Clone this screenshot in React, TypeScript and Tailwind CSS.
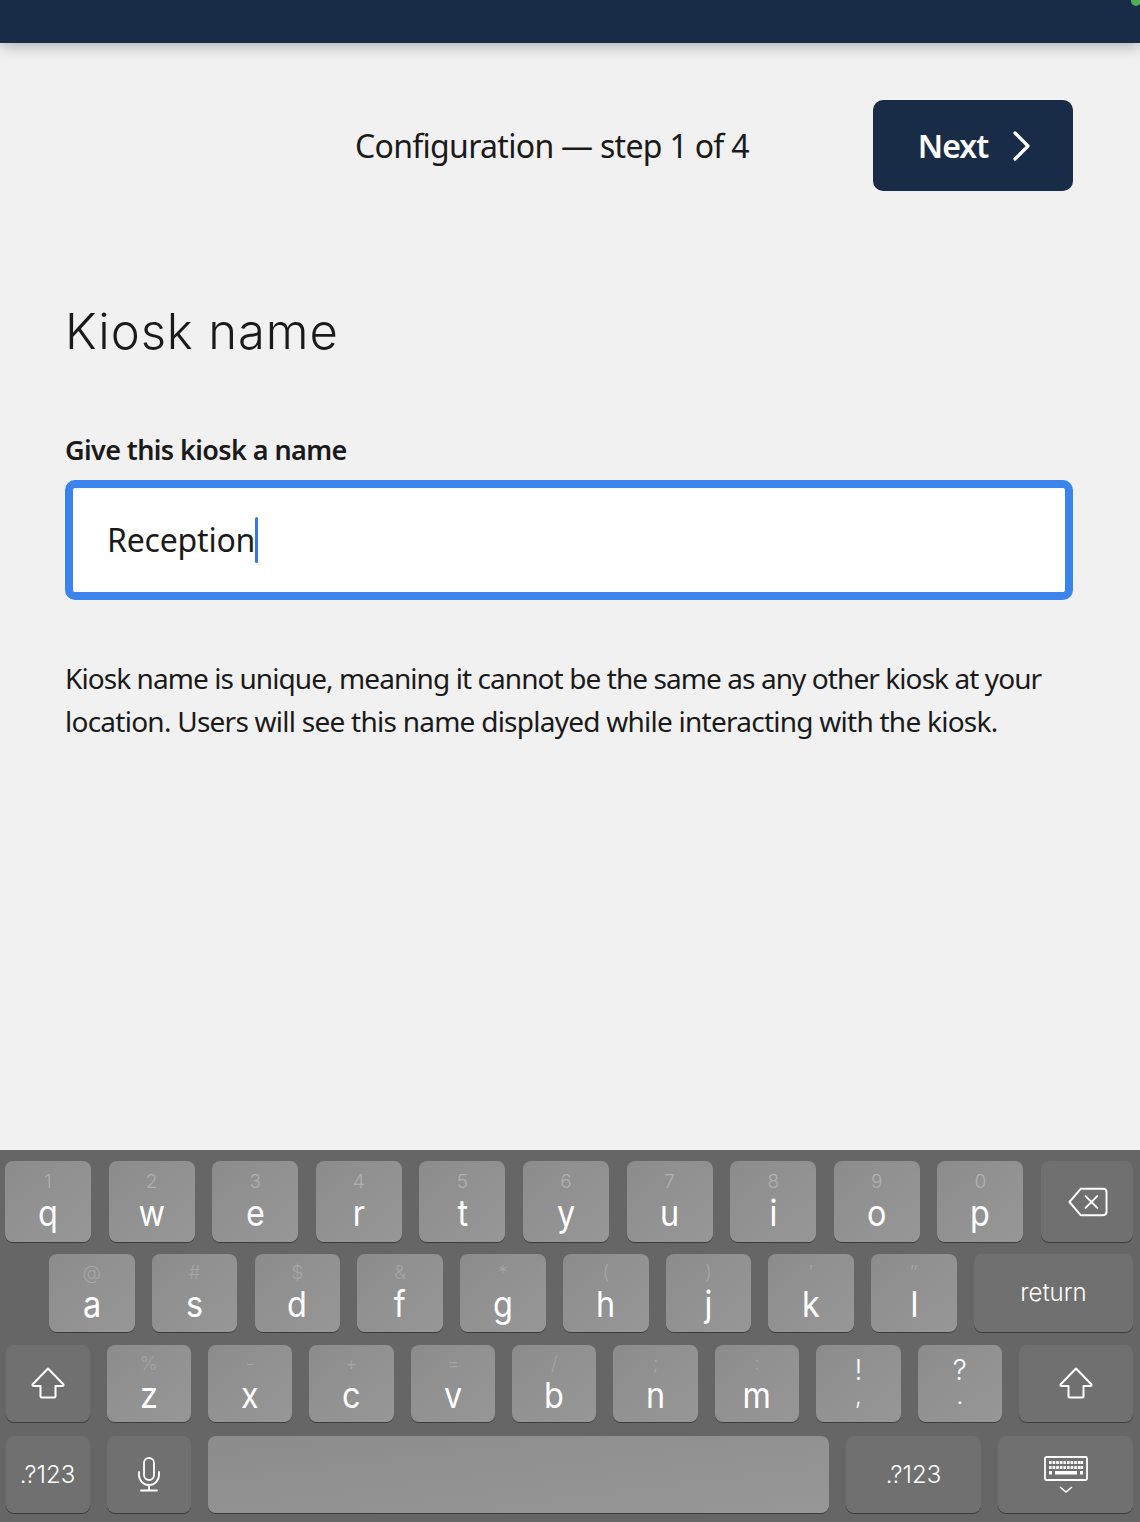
import React from "react";

const body = { fontFamily: '"Noto Sans", sans-serif' };
const kb = { fontFamily: 'Inter, sans-serif' };

function Key({ letter, hint, pt, hintColor }: { letter: string; hint: string; pt: string; hintColor: string }) {
  return (
    <div className={`flex-1 min-w-0 rounded-lg bg-gradient-to-br from-[#8c8c8c] to-[#979797] shadow-[0_1px_0_#3c3c3c] flex flex-col items-center ${pt}`}>
      <span className={`text-[19px] leading-[24px] font-[350] ${hintColor}`}>{hint}</span>
      <span className="text-[36px] leading-[38px] font-[380] text-white scale-x-[0.9]">{letter}</span>
    </div>
  );
}

function Dark({ className, children }: { className: string; children: React.ReactNode }) {
  return (
    <div className={`rounded-lg bg-[#707070] shadow-[0_1px_0_#3c3c3c] flex items-center justify-center text-white font-[350] ${className}`}>
      {children}
    </div>
  );
}

function ShiftIcon() {
  return (
    <svg className="mb-[2px]" width="34" height="32" viewBox="0 0 34 32" fill="none" stroke="white" strokeWidth="2" strokeLinejoin="round">
      <path d="M17 1.5 L32.5 17.5 Q33 19 31 19 H24.5 V29 Q24.5 30.5 23 30.5 H11 Q9.5 30.5 9.5 29 V19 H3 Q1 19 1.5 17.5 Z" />
    </svg>
  );
}

function BackspaceIcon() {
  return (
    <svg className="ml-[2px]" width="40" height="30" viewBox="0 0 41 30" fill="none" stroke="white" strokeWidth="2" strokeLinejoin="round" strokeLinecap="round">
      <path d="M13 1.5 H36 Q39.5 1.5 39.5 5 V25 Q39.5 28.5 36 28.5 H13 L1.5 15 Z" />
      <path d="M18 9 L30 21 M30 9 L18 21" />
    </svg>
  );
}

function MicIcon() {
  return (
    <svg width="22" height="35" viewBox="0 0 22 35" fill="none" stroke="white" strokeWidth="1.8" strokeLinecap="round">
      <rect x="6" y="1" width="10" height="22" rx="5" />
      <path d="M1 15 V18 A10 10 0 0 0 21 18 V15 M11 28 V33 M3 33.5 H19" />
    </svg>
  );
}

function KeyboardIcon() {
  const rows = [0, 1];
  const cols = [5, 8.6, 12.2, 15.8, 19.4, 23, 26.6, 30.2, 33.8, 36.5];
  return (
    <svg width="44" height="38" viewBox="0 0 44 38" fill="none">
      <rect x="1" y="1" width="42" height="23" rx="1.5" stroke="white" strokeWidth="1.8" />
      {rows.map((r) =>
        cols.map((x) => <rect key={`${r}-${x}`} x={x} y={5 + r * 5} width="2.6" height="3" fill="white" />)
      )}
      <rect x="11" y="15" width="22" height="3.5" fill="white" />
      <rect x="5" y="15" width="3" height="3.5" fill="white" />
      <rect x="36" y="15" width="3" height="3.5" fill="white" />
      <path d="M16 31 L22 36 L28 31" stroke="white" strokeWidth="1.6" />
    </svg>
  );
}

const r1 = [["q","1"],["w","2"],["e","3"],["r","4"],["t","5"],["y","6"],["u","7"],["i","8"],["o","9"],["p","0"]];
const r2 = [["a","@"],["s","#"],["d","$"],["f","&"],["g","*"],["h","("],["j",")"],["k","′"],["l","″"]];
const r3 = [["z","%"],["x","-"],["c","+"],["v","="],["b","/"],["n",";"],["m",":"]];

export default function App() {
  return (
    <div className="w-[1140px] h-[1522px] bg-[#f1f1f1] flex flex-col overflow-hidden" style={body}>
      <div className="h-[43px] shrink-0 bg-[#182c47] shadow-[0_4px_14px_rgba(0,0,0,0.25)] flex justify-end">
        <div className="w-[10px] h-[10px] rounded-full bg-[#4caf50] -mt-[4px] -mr-[1px]" />
      </div>

      <div className="flex items-center justify-between pl-[355px] pr-[67px] mt-[57px]">
        <span className="text-[32px] text-[#1a1a1a] tracking-[-0.7px]">Configuration — step 1 of 4</span>
        <button className="w-[200px] h-[91px] rounded-[10px] bg-[#182c47] text-white text-[32px] font-semibold flex items-center justify-center gap-[25px] tracking-[-1px] pl-[2px]">
          Next
          <svg width="17" height="30" viewBox="0 0 17 30" fill="none" stroke="white" strokeWidth="3.2" strokeLinecap="round" strokeLinejoin="round">
            <path d="M2 2 L15 15 L2 28" />
          </svg>
        </button>
      </div>

      <div className="flex-1 px-[65px]">
        <h1 className="mt-[108px] text-[49px] leading-[66px] font-light text-[#1a1a1a] tracking-[0.9px]" style={{ fontFamily: "Inter, sans-serif" }}>Kiosk name</h1>
        <label className="block mt-[65px] text-[27px] leading-[40px] font-semibold text-[#1a1a1a] tracking-[-0.6px]">Give this kiosk a name</label>
        <div className="mt-[10px] w-[1008px] h-[120px] border-[8px] border-[#3a84ec] rounded-[10px] bg-white flex items-center pl-[34px]">
          <span className="text-[32px] text-[#1a1a1a] tracking-[-0.2px]">Reception</span>
          <span className="w-[3px] h-[46px] bg-[#3a74ec] rounded-sm" />
        </div>
        <p className="mt-[57px] text-[28px] leading-[43px] text-[#1a1a1a] whitespace-nowrap">
          <span className="block tracking-[-0.92px]">Kiosk name is unique, meaning it cannot be the same as any other kiosk at your</span>
          <span className="block tracking-[-0.75px]">location. Users will see this name displayed while interacting with the kiosk.</span>
        </p>
      </div>

      <div className="h-[372px] shrink-0 bg-[#666666] pt-[11px] pl-[5px] pr-[7px] flex flex-col" style={kb}>
        <div className="flex gap-[17.5px] h-[81px]">
          {r1.map(([l, h]) => <Key key={l} letter={l} hint={h} pt="pt-[9px]" hintColor="text-[#b0b0b0]" />)}
          <Dark className="w-[92px]"><BackspaceIcon /></Dark>
        </div>
        <div className="flex gap-[17.2px] h-[78px] mt-[12px] pl-[44px]">
          {r2.map(([l, h]) => <Key key={l} letter={l} hint={h} pt="pt-[7px]" hintColor="text-[#a6a6a6]" />)}
          <Dark className="w-[159px] text-[24px]">return</Dark>
        </div>
        <div className="flex gap-[17px] h-[77px] mt-[13px] pl-[0.5px]">
          <Dark className="w-[84px]"><ShiftIcon /></Dark>
          {r3.map(([l, h]) => <Key key={l} letter={l} hint={h} pt="pt-[7px]" hintColor="text-[#a6a6a6]" />)}
          <div className="flex-1 min-w-0 rounded-lg bg-gradient-to-br from-[#8c8c8c] to-[#979797] shadow-[0_1px_0_#3c3c3c] flex flex-col items-center text-white font-[350]">
            <span className="text-[28px] leading-[26px] mt-[12px]">!</span>
            <span className="text-[24px] leading-[24px] mt-[1px]">,</span>
          </div>
          <div className="flex-1 min-w-0 rounded-lg bg-gradient-to-br from-[#8c8c8c] to-[#979797] shadow-[0_1px_0_#3c3c3c] flex flex-col items-center text-white font-[350]">
            <span className="text-[28px] leading-[26px] mt-[12px]">?</span>
            <span className="text-[24px] leading-[24px] mt-[1px]">.</span>
          </div>
          <Dark className="w-[114px]"><ShiftIcon /></Dark>
        </div>
        <div className="flex gap-[17px] h-[77px] mt-[14px] pl-[0.5px]">
          <Dark className="w-[84px] text-[24px]">.?123</Dark>
          <Dark className="w-[84.5px]"><MicIcon /></Dark>
          <div className="flex-1 rounded-lg bg-gradient-to-br from-[#8c8c8c] to-[#979797] shadow-[0_1px_0_#3c3c3c]" />
          <Dark className="w-[135px] text-[24px]">.?123</Dark>
          <Dark className="w-[135px]"><KeyboardIcon /></Dark>
        </div>
      </div>
    </div>
  );
}
